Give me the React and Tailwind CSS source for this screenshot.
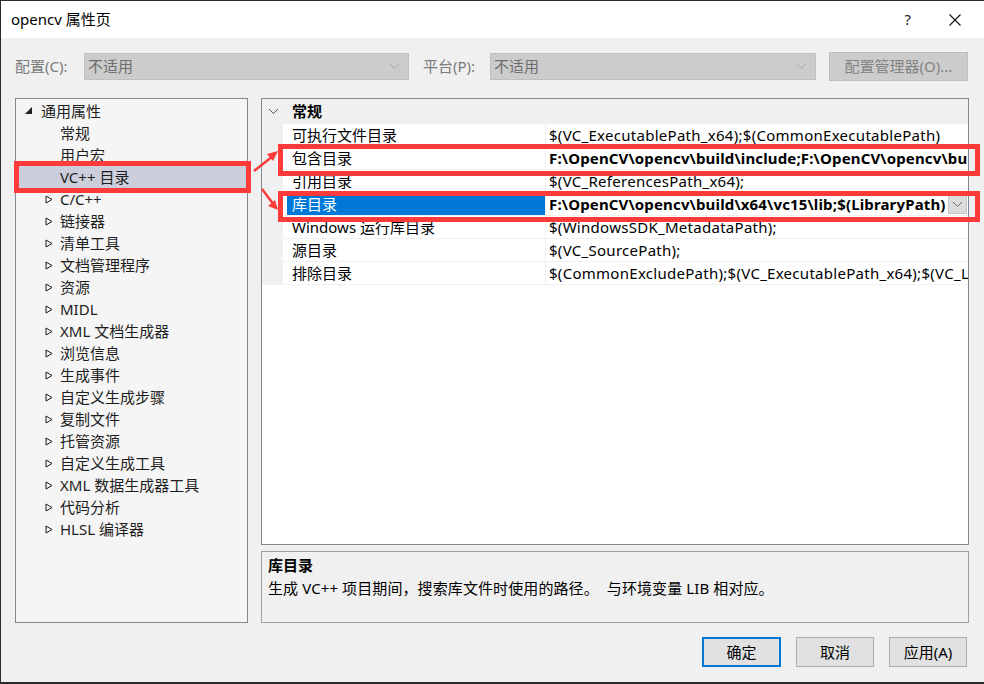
import React from 'react';

const FONT = "font-['Noto_Sans','Noto_Sans_CJK_SC',sans-serif]";

const treeItems = [
  'C/C++', '链接器', '清单工具', '文档管理程序', '资源', 'MIDL', 'XML 文档生成器', '浏览信息',
  '生成事件', '自定义生成步骤', '复制文件', '托管资源', '自定义生成工具', 'XML 数据生成器工具',
  '代码分析', 'HLSL 编译器',
];

const rows = [
  { name: '可执行文件目录', value: '$(VC_ExecutablePath_x64);$(CommonExecutablePath)' },
  { name: '包含目录', value: 'F:\\OpenCV\\opencv\\build\\include;F:\\OpenCV\\opencv\\build\\include\\opencv2;$(IncludePath)', bold: true },
  { name: '引用目录', value: '$(VC_ReferencesPath_x64);' },
  { name: '库目录', value: 'F:\\OpenCV\\opencv\\build\\x64\\vc15\\lib;$(LibraryPath)', bold: true, selected: true },
  { name: 'Windows 运行库目录', value: '$(WindowsSDK_MetadataPath);' },
  { name: '源目录', value: '$(VC_SourcePath);' },
  { name: '排除目录', value: '$(CommonExcludePath);$(VC_ExecutablePath_x64);$(VC_LibraryPath_x64);' },
];

function Chevron({ color = '#a0a0a0' }) {
  return (
    <svg width="11" height="7" viewBox="0 0 11 7">
      <polyline points="1,1 5.5,5.5 10,1" fill="none" stroke={color} strokeWidth="1" />
    </svg>
  );
}

function OpenTri() {
  return (
    <svg width="8" height="9" viewBox="0 0 8 9">
      <polygon points="1,1 7,4.5 1,8" fill="none" stroke="#1e1e1e" strokeWidth="1" />
    </svg>
  );
}

function Select({ w }) {
  return (
    <div className={`${w} h-[27px] bg-[#cccccc] border border-[#bfbfbf] flex items-center justify-between pl-[3px] pr-[8px] text-[15px] text-[#6d6d6d]`}>
      <span>不适用</span>
      <Chevron color="#a8a8a8" />
    </div>
  );
}

export default function App() {
  return (
    <div className={`w-[984px] h-[684px] flex flex-col bg-[#f0f0f0] border-l border-t border-b-2 border-[#2b2b2b] relative overflow-hidden ${FONT}`}>
      {/* title bar */}
      <div className="h-[37px] bg-white flex items-center pl-[10px] shrink-0">
        <span className="text-[15px] text-black">opencv 属性页</span>
        <span className="ml-auto text-[15px] text-[#222] mr-[38px]">?</span>
        <svg width="12" height="12" viewBox="0 0 12 12" className="mr-[23px]">
          <path d="M0.5 0.5 L11.5 11.5 M11.5 0.5 L0.5 11.5" stroke="#111" strokeWidth="1.1" />
        </svg>
      </div>

      {/* config row */}
      <div className="mt-[14px] h-[29px] flex items-center pl-[14px] shrink-0 text-[15px] text-[#7a7a7a]">
        <span className="w-[69px]">配置(C):</span>
        <Select w="w-[325px]" />
        <span className="ml-[14px] w-[67px]">平台(P):</span>
        <Select w="w-[326px]" />
        <div className="ml-[13px] w-[139px] h-[29px] bg-[#cccccc] border border-[#bfbfbf] flex items-center justify-center text-[#838383]">
          配置管理器(O)...
        </div>
      </div>

      {/* main */}
      <div className="mt-[17px] h-[525px] flex pl-[14px] shrink-0">
        {/* tree */}
        <div className="w-[233px] h-full border border-[#828790] bg-[#f5f5f5] pt-[1px] text-[15px] text-[#1e1e1e]">
          <div className="h-[22px] flex items-center">
            <svg width="8" height="8" viewBox="0 0 8 8" className="ml-[9px]">
              <polygon points="7,0 7,7 0,7" fill="#1e1e1e" />
            </svg>
            <span className="ml-[8px]">通用属性</span>
          </div>
          <div className="h-[22px] flex items-center pl-[44px]">常规</div>
          <div className="h-[22px] flex items-center pl-[44px]">用户宏</div>
          <div className="h-[22px] flex items-center pl-[44px] bg-[#cccedb]">VC++ 目录</div>
          {treeItems.map((t) => (
            <div key={t} className="h-[22px] flex items-center">
              <span className="ml-[29px] flex"><OpenTri /></span>
              <span className="ml-[7px]">{t}</span>
            </div>
          ))}
        </div>

        {/* right side */}
        <div className="ml-[13px] w-[708px] flex flex-col">
          <div className="h-[447px] border border-[#828790] bg-white flex flex-col overflow-hidden text-[15px]">
            <div className="h-[25px] bg-[#f0f0f0] flex items-center shrink-0">
              <span className="ml-[6px] flex"><Chevron color="#555" /></span>
              <span className="ml-[13px] font-bold text-black">常规</span>
            </div>
            {rows.map((r) => (
              <div key={r.name} className="h-[23px] flex shrink-0 border-b border-[#f0f0f0]">
                <div className="w-[21px] bg-[#f0f0f0] shrink-0" />
                {r.selected ? (
                  <div className="ml-[4px] w-[258px] shrink-0 flex items-center pl-[5px] bg-[#0078d7] text-white">{r.name}</div>
                ) : (
                  <div className="w-[262px] shrink-0 flex items-center pl-[9px] text-black">{r.name}</div>
                )}
                <div className="w-px bg-[#f0f0f0] shrink-0" />
                <div className="flex-1 min-w-0 flex items-center pl-[3px] relative">
                  <span className={`whitespace-nowrap overflow-hidden text-black ${r.bold ? 'font-bold tracking-[0.15px]' : 'tracking-[0.28px]'}`}>{r.value}</span>
                  {r.selected && (
                    <div className="absolute right-[1px] top-[1px] w-[19px] h-[20px] bg-[#dcdcdc] border border-[#c4c4c4] flex items-center justify-center">
                      <Chevron color="#666" />
                    </div>
                  )}
                </div>
              </div>
            ))}
            <div className="flex-1 bg-white" />
          </div>

          <div className="mt-[6px] h-[72px] border border-[#a0a0a0] bg-[#f0f0f0] pl-[6px] pt-[2px] text-[15px] text-black">
            <div className="h-[22px] flex items-center font-bold">库目录</div>
            <div className="h-[24px] flex items-center tracking-[0.1px]">生成 VC++ 项目期间，搜索库文件时使用的路径。&nbsp; 与环境变量 LIB 相对应。</div>
          </div>
        </div>
      </div>

      {/* buttons */}
      <div className="mt-[14px] h-[30px] flex justify-end pr-[17px] gap-[15px] text-[15px] text-black shrink-0">
        <div className="w-[79px] h-[30px] border-2 border-[#0078d7] bg-[#e1e1e1] flex items-center justify-center">确定</div>
        <div className="w-[78px] h-[30px] border border-[#adadad] bg-[#e1e1e1] flex items-center justify-center">取消</div>
        <div className="w-[78px] h-[30px] border border-[#adadad] bg-[#e1e1e1] flex items-center justify-center">应用(A)</div>
      </div>

      {/* red annotations */}
      <div className="absolute left-[13px] top-[160px] w-[237px] h-[32px] border-[5px] border-[#fd3a3a]" />
      <div className="absolute left-[277px] top-[143px] w-[702px] h-[32px] border-[5px] border-[#fd3a3a]" />
      <div className="absolute left-[277px] top-[190px] w-[702px] h-[31px] border-[5px] border-[#fd3a3a]" />
      <svg className="absolute left-0 top-0" width="984" height="684" viewBox="0 0 984 684" pointerEvents="none">
        <line x1="253" y1="170" x2="272" y2="155" stroke="#fd3a3a" strokeWidth="2.5" />
        <polygon points="277,150 266,153 272,160" fill="#fd3a3a" />
        <line x1="261" y1="188" x2="273" y2="204" stroke="#fd3a3a" strokeWidth="2.5" />
        <polygon points="277,209 267,205 274,199" fill="#fd3a3a" />
      </svg>
    </div>
  );
}
